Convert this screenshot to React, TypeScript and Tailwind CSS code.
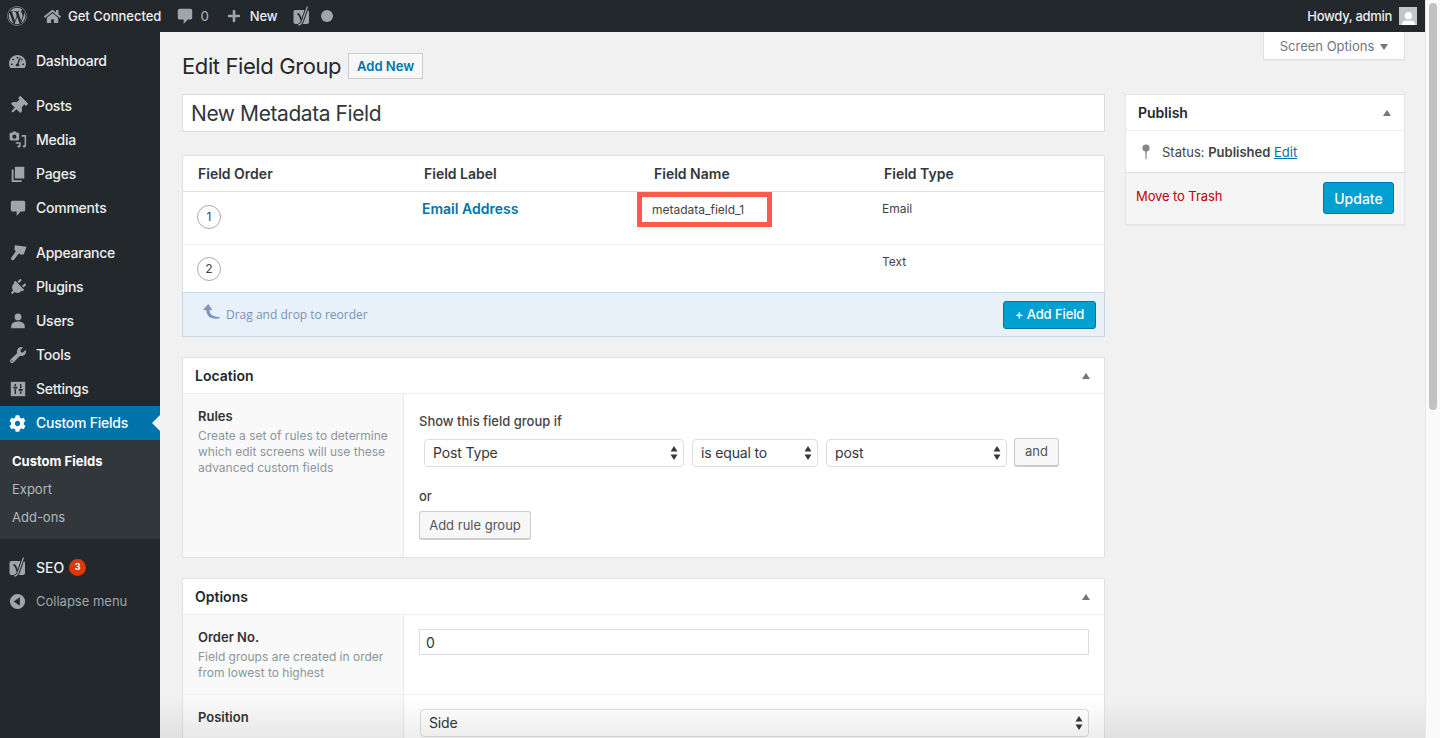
import type { ReactNode } from 'react';
import {
  FaCog,
  FaHome,
  FaPlug,
  FaPlus,
  FaTachometerAlt,
  FaThumbtack,
  FaUser,
  FaWordpress,
  FaWrench,
} from 'react-icons/fa';

const CommentIcon = ({ className }: { className: string }) => (
  <svg viewBox="0 0 20 20" className={className} fill="currentColor">
    <path d="M4 2h12c1.100 0 2 .9 2 2v8c0 1.100-.9 2-2 2h-3l-4.500 5v-5H4c-1.100 0-2-.9-2-2V4c0-1.100.9-2 2-2z" />
  </svg>
);

const YoastIcon = ({ className }: { className: string }) => (
  <svg viewBox="0 0 20 20" className={className}>
    <path d="M3.500 4H15c1.200 0 2 .8 2 2v10c0 1.200-.8 2-2 2H3.500c-1.200 0-2-.8-2-2V6c0-1.200.8-2 2-2z" fill="currentColor" />
    <path d="M5.500 7.500c2 1 3 3.500 3.700 6.500" stroke="#23282d" strokeWidth="1.800" fill="none" />
    <path d="M15.500 .5L10 16c-.6 1.700-1.800 2.800-3.800 3.200" stroke="#23282d" strokeWidth="3.200" fill="none" />
    <path d="M15.500 .5L10 16c-.6 1.700-1.800 2.800-3.800 3.200" stroke="currentColor" strokeWidth="1.200" fill="none" />
  </svg>
);

const MediaIcon = ({ className }: { className: string }) => (
  <svg viewBox="0 0 20 20" className={className} fill="currentColor">
    <path
      fillRule="evenodd"
      d="M2 2h1.500l.8-1.500h3.400L8.500 2H10c.8 0 1.300.5 1.300 1.300v6c0 .8-.5 1.300-1.300 1.300H2c-.8 0-1.300-.5-1.300-1.300v-6C.7 2.500 1.200 2 2 2zm4 2a2.300 2.300 0 100 4.600A2.300 2.300 0 006 4zM14 4.500h5v12c0 1.200-1 1.900-2 1.900s-1.700-.6-1.700-1.400.9-1.500 2-1.500V6.500H14zM7.500 12.500H13v4.200c0 1-1 1.700-2 1.700s-1.600-.6-1.600-1.300.8-1.400 2-1.400v-1.400H7.500z"
    />
  </svg>
);

const PagesIcon = ({ className }: { className: string }) => (
  <svg viewBox="0 0 20 20" className={className} fill="currentColor">
    <path d="M6.500 2H17v13H6.500z" />
    <path d="M3 5h2v12h9v2H3z" />
  </svg>
);

const BrushIcon = ({ className }: { className: string }) => (
  <svg viewBox="0 0 20 20" className={className} fill="currentColor">
    <path d="M6.500 1.500L19.500 3l-3 8.500-3.500.5-1.800-1.800-5.700 7.300c-1.100 1.400-4-.3-3-2.300l5-6.900-1.500-2.300z" />
  </svg>
);

const UserIcon = ({ className }: { className: string }) => (
  <svg viewBox="0 0 20 20" className={className} fill="currentColor">
    <circle cx="10" cy="5.500" r="3.800" />
    <path d="M2.500 18v-2.500c0-3 3-5 7.500-5s7.500 2 7.500 5V18z" />
  </svg>
);

const SettingsIcon = ({ className }: { className: string }) => (
  <svg viewBox="0 0 20 20" className={className}>
    <path d="M2 2h16v16H2z" fill="currentColor" />
    <path d="M7 4.500v2.500M7 10v5.500M13 4.500v5M13 12.500v3" stroke="#23282d" strokeWidth="1.500" fill="none" />
    <path d="M4.800 8.500h4.400M10.800 11h4.400" stroke="#23282d" strokeWidth="1.800" fill="none" />
  </svg>
);

const CollapseIcon = ({ className }: { className: string }) => (
  <svg viewBox="0 0 20 20" className={className} fill="currentColor">
    <path fillRule="evenodd" d="M10 2a8 8 0 110 16 8 8 0 010-16zm2.500 3.500L6 10l6.500 4.500z" />
  </svg>
);

const RingPinIcon = () => (
  <svg viewBox="0 0 12 20" className="h-[16px] w-[10px] text-[#82878c]" fill="currentColor">
    <circle cx="6" cy="5" r="4.500" />
    <path d="M5 8h2l-.4 11h-1.200z" />
  </svg>
);

const UpDown = () => (
  <svg viewBox="0 0 8 14" className="h-[14px] w-[8px] text-[#32373c]" fill="currentColor">
    <path d="M4 0l3.500 5.500h-7zM4 14L.5 8.500h7z" />
  </svg>
);

const Caret = () => (
  <div className="h-0 w-0 border-x-[4px] border-b-[6px] border-x-transparent border-b-[#72777c]" />
);

const ArrowIcon = () => (
  <svg viewBox="0 0 20 18" className="h-[18px] w-[19px] text-[#7e97bb]" fill="none">
    <path d="M1 7l5.500-6.500L11 7H8c0 4.500 3 6.500 8 7 2 .2 3 1 3 1.500-9 2-14-1-14.500-8.500z" fill="currentColor" />
  </svg>
);

const menuTop = [{ label: 'Dashboard', icon: <FaTachometerAlt className="h-[17px] w-[17px]" /> }];

const menuContent = [
  { label: 'Posts', icon: <FaThumbtack className="h-[18px] w-[18px] rotate-45" /> },
  { label: 'Media', icon: <MediaIcon className="h-[18px] w-[18px]" /> },
  { label: 'Pages', icon: <PagesIcon className="h-[18px] w-[18px]" /> },
  { label: 'Comments', icon: <CommentIcon className="h-[18px] w-[18px]" /> },
];

const menuAdmin = [
  { label: 'Appearance', icon: <BrushIcon className="h-[18px] w-[18px]" /> },
  { label: 'Plugins', icon: <FaPlug className="h-[17px] w-[17px] rotate-45" /> },
  { label: 'Users', icon: <UserIcon className="h-[18px] w-[18px]" /> },
  { label: 'Tools', icon: <FaWrench className="h-[16px] w-[16px]" /> },
  { label: 'Settings', icon: <SettingsIcon className="h-[18px] w-[18px]" /> },
];

const MenuItem = ({ label, icon }: { label: string; icon: ReactNode }) => (
  <div className="flex h-[34px] items-center text-[14px] font-medium tracking-[-0.25px] text-[#eeeeee]">
    <div className="flex w-[36px] justify-center pr-[1px] text-[#a0a5aa]">{icon}</div>
    <span className="pb-[2px]">{label}</span>
  </div>
);

const Sidebar = () => (
  <div className="flex h-full w-[160px] shrink-0 flex-col bg-[#23282d] pt-[12px]">
    {menuTop.map((m) => (
      <MenuItem key={m.label} {...m} />
    ))}
    <div className="h-[11px]" />
    {menuContent.map((m) => (
      <MenuItem key={m.label} {...m} />
    ))}
    <div className="h-[11px]" />
    {menuAdmin.map((m) => (
      <MenuItem key={m.label} {...m} />
    ))}
    <div className="relative flex h-[34px] items-center bg-[#0073aa] text-[14px] font-medium tracking-[-0.25px] text-white">
      <div className="flex w-[36px] justify-center pr-[1px]">
        <FaCog className="h-[17px] w-[17px]" />
      </div>
      <span className="pb-[2px]">Custom Fields</span>
      <div className="absolute right-0 top-[9px] h-0 w-0 border-y-[8px] border-r-[8px] border-y-transparent border-r-[#f1f1f1]" />
    </div>
    <div className="flex h-[99px] flex-col gap-[8px] bg-[#32373c] pl-[12px] pt-[11px] text-[13px] text-[#b4b9be]">
      <div className="h-[20px] font-bold leading-[20px] text-white">Custom Fields</div>
      <div className="h-[20px] leading-[20px]">Export</div>
      <div className="h-[20px] leading-[20px]">Add-ons</div>
    </div>
    <div className="h-[11px]" />
    <div className="flex h-[34px] items-center text-[14px] font-medium text-[#eeeeee]">
      <div className="flex w-[36px] justify-center text-[#a0a5aa]">
        <YoastIcon className="h-[20px] w-[20px]" />
      </div>
      <span>SEO</span>
      <span className="ml-[5px] flex h-[17px] w-[17px] items-center justify-center rounded-full bg-[#dc3a03] text-[9px] font-bold text-white">
        3
      </span>
    </div>
    <div className="flex h-[34px] items-center text-[13px] text-[#a0a5aa]">
      <div className="flex w-[36px] justify-center pr-[1px]">
        <CollapseIcon className="h-[19px] w-[19px]" />
      </div>
      <span className="pt-[2px]">Collapse menu</span>
    </div>
  </div>
);

const TopBar = () => (
  <div className="flex h-[32px] shrink-0 items-center bg-[#23282d] pl-[7px] pr-[8px] text-[13px] font-medium text-[#eeeeee]">
    <FaWordpress className="h-[20px] w-[20px] text-[#a0a5aa]" />
    <FaHome className="ml-[17px] h-[17px] w-[17px] text-[#a0a5aa]" />
    <span className="ml-[7px] pt-[1px]">Get Connected</span>
    <CommentIcon className="ml-[15px] h-[18px] w-[18px] text-[#a0a5aa]" />
    <span className="ml-[6px] pt-[1px] text-[#a0a5aa]">0</span>
    <FaPlus className="ml-[18px] h-[14px] w-[14px] text-[#a0a5aa]" />
    <span className="ml-[9px] pt-[1px] tracking-[-0.2px]">New</span>
    <YoastIcon className="ml-[15px] h-[20px] w-[20px] text-[#a0a5aa]" />
    <div className="ml-[9px] h-[12px] w-[12px] rounded-full bg-[#a0a5aa]" />
    <div className="ml-auto flex items-center gap-[7px]">
      <span className="pt-[1px] tracking-[-0.3px]">Howdy, admin</span>
      <div className="flex h-[18px] w-[18px] items-end justify-center overflow-hidden bg-[#c5c5c5]">
        <FaUser className="h-[15px] w-[15px] translate-y-[2px] text-white" />
      </div>
    </div>
  </div>
);

const Select = ({ label, className }: { label: string; className: string }) => (
  <div
    className={`flex h-[28px] items-center justify-between rounded-[4px] border border-[#dddddd] bg-white pl-[8px] pr-[5px] text-[14px] tracking-[-0.15px] text-[#32373c] ${className}`}
  >
    <span className="pb-[2px]">{label}</span>
    <UpDown />
  </div>
);

const GhostButton = ({ label, className }: { label: string; className: string }) => (
  <div
    className={`flex items-center justify-center rounded-[3px] border border-[#cccccc] border-b-2 bg-[#f7f7f7] text-[13px] text-[#555555] ${className}`}
  >
    {label}
  </div>
);

const FieldTable = () => (
  <div className="mt-[23px] bg-white text-[#32373c]">
    <div className="grid h-[37px] grid-cols-[226px_230px_230px_1fr] items-center border border-b border-[#e1e1e1] text-[14px] font-semibold">
      <span className="pl-[15px]">Field Order</span>
      <span className="pl-[15px]">Field Label</span>
      <span className="pl-[15px]">Field Name</span>
      <span className="pl-[15px]">Field Type</span>
    </div>
    <div className="grid h-[53px] grid-cols-[226px_230px_230px_1fr] border-x border-b border-x-[#e1e1e1] border-b-[#f0f0f0]">
      <div className="pl-[14px] pt-[13px]">
        <div className="flex h-[24px] w-[24px] items-center justify-center rounded-full border border-[#aaaaaa] text-[12px] text-[#444444]">
          1
        </div>
      </div>
      <div className="pl-[13px] pt-[7px] text-[14px] font-semibold leading-[20px] text-[#0073aa]">Email Address</div>
      <div className="-ml-[2px]">
        <div className="h-[35px] w-[135px] border-[5px] border-[#ff5a4d] pl-[10px] text-[12px] leading-[25px] text-[#444444]">
          metadata_field_1
        </div>
      </div>
      <div className="pl-[13px] pt-[7px] text-[12px] leading-[20px] text-[#444444]">Email</div>
    </div>
    <div className="grid h-[47px] grid-cols-[226px_230px_230px_1fr] border-x border-x-[#e1e1e1]">
      <div className="pl-[14px] pt-[12px]">
        <div className="flex h-[24px] w-[24px] items-center justify-center rounded-full border border-[#aaaaaa] text-[12px] text-[#444444]">
          2
        </div>
      </div>
      <div />
      <div />
      <div className="pl-[13px] pt-[7px] text-[12px] leading-[20px] text-[#444444]">Text</div>
    </div>
    <div className="flex h-[45px] items-center border border-[#c6d8e6] bg-[#e8f0f9] pl-[19px] pr-[8px]">
      <div className="-translate-y-[3px]">
        <ArrowIcon />
      </div>
      <span className="ml-[5px] font-['Open_Sans',sans-serif] text-[12px] text-[#7a93b5]">
        Drag and drop to reorder
      </span>
      <div className="ml-auto flex h-[28px] w-[93px] items-center justify-center rounded-[3px] border border-[#0073aa] bg-[#00a0d2] text-[13px] font-medium tracking-[-0.1px] text-white">
        + Add Field
      </div>
    </div>
  </div>
);

const BoxHeader = ({ title }: { title: string }) => (
  <div className="flex h-[36px] items-center justify-between border-b border-[#eeeeee] pl-[12px] pr-[14px] text-[14px] font-semibold text-[#23282d]">
    <span>{title}</span>
    <Caret />
  </div>
);

const LeftCell = ({ title, pad, children }: { title: string; pad: string; children?: ReactNode }) => (
  <div className={`w-[221px] shrink-0 border-r border-[#e8e8e8] bg-[#f9f9f9] pl-[15px] pr-[10px] ${pad}`}>
    <div className="text-[13px] font-semibold leading-[18px] text-[#333333]">{title}</div>
    {children && <div className="mt-[3px] text-[12px] leading-[16px] text-[#8b959c]">{children}</div>}
  </div>
);

const LocationBox = () => (
  <div className="mt-[20px] border border-[#e1e1e1] bg-white">
    <BoxHeader title="Location" />
    <div className="flex h-[163px]">
      <LeftCell title="Rules" pad="pt-[13px]">
        Create a set of rules to determine which edit screens will use these advanced custom fields
      </LeftCell>
      <div className="flex-1 pl-[15px] pt-[18px] text-[13px] text-[#444444]">
        <div className="font-medium leading-[18px]">Show this field group if</div>
        <div className="ml-[5px] mt-[9px] flex gap-[8px]">
          <Select label="Post Type" className="w-[260px]" />
          <Select label="is equal to" className="w-[126px]" />
          <Select label="post" className="w-[181px]" />
          <GhostButton label="and" className="-mt-[1px] ml-[-1px] h-[29px] w-[45px]" />
        </div>
        <div className="mt-[20px] font-medium leading-[18px]">or</div>
        <GhostButton label="Add rule group" className="mt-[6px] h-[29px] w-[112px] pt-[1px]" />
      </div>
    </div>
  </div>
);

const OptionsBox = () => (
  <div className="mt-[20px] border border-[#e1e1e1] bg-white">
    <BoxHeader title="Options" />
    <div className="flex h-[80px] border-b border-[#f0f0f0]">
      <LeftCell title="Order No." pad="pt-[13px]">
        Field groups are created in order from lowest to highest
      </LeftCell>
      <div className="flex-1 px-[15px] pt-[14px]">
        <div className="flex h-[26px] items-center border border-[#dddddd] px-[6px] text-[14px] text-[#32373c]">0</div>
      </div>
    </div>
    <div className="flex h-[60px]">
      <LeftCell title="Position" pad="pt-[13px]" />
      <div className="flex-1 pl-[16px] pr-[15px] pt-[14px]">
        <Select label="Side" className="w-full" />
      </div>
    </div>
  </div>
);

const PublishBox = () => (
  <div className="border border-[#e5e5e5] bg-white text-[13px] text-[#444444] shadow-[0_1px_1px_rgba(0,0,0,0.04)]">
    <div className="flex h-[36px] items-center justify-between border-b border-[#eeeeee] pl-[12px] pr-[13px] text-[14px] font-semibold text-[#23282d]">
      <span>Publish</span>
      <Caret />
    </div>
    <div className="flex h-[41px] items-center pl-[15px]">
      <RingPinIcon />
      <span className="ml-[11px] pt-[2px]">
        Status: <span className="font-semibold">Published</span>{' '}
        <span className="text-[#0073aa] underline">Edit</span>
      </span>
    </div>
    <div className="flex h-[52px] items-start justify-between border-t border-[#dddddd] bg-[#f5f5f5] px-[10px] pt-[9px]">
      <span className="mt-[5px] tracking-[-0.1px] text-[#c00000]">Move to Trash</span>
      <div className="flex h-[32px] w-[71px] items-center justify-center rounded-[3px] border border-[#0073aa] bg-[#00a0d2] text-[14px] font-medium text-white">
        Update
      </div>
    </div>
  </div>
);

export default function App() {
  return (
    <div className="relative flex h-[738px] overflow-hidden bg-[#f1f1f1] font-['Inter',sans-serif]">
      <div className="flex min-w-0 flex-1 flex-col">
        <TopBar />
        <div className="flex min-h-0 flex-1">
          <Sidebar />
          <div className="min-w-0 flex-1 pl-[22px] pr-[20px]">
            <div className="flex h-[62px] items-start justify-between">
              <div className="flex items-center pt-[21px]">
                <h1 className="text-[22px] font-normal leading-[26px] tracking-[-0.4px] text-[#23282d]">
                  Edit Field Group
                </h1>
                <div className="ml-[7px] flex h-[26px] w-[75px] items-center justify-center border border-[#cccccc] bg-[#f7f7f7] pt-[1px] text-[13px] font-semibold text-[#0073aa]">
                  Add New
                </div>
              </div>
              <div className="flex h-[28px] w-[142px] items-center justify-center gap-[6px] border-x border-b border-[#e1e1e1] bg-white pt-[2px] text-[13px] text-[#72777c] shadow-[0_1px_1px_rgba(0,0,0,0.04)]">
                <span>Screen Options</span>
                <div className="h-0 w-0 border-x-[4px] border-t-[6px] border-x-transparent border-t-[#72777c]" />
              </div>
            </div>
            <div className="grid grid-cols-[923px_280px] gap-[20px]">
              <div>
                <div className="flex h-[38px] items-center border border-[#dddddd] bg-white pl-[8px] pt-[1px] text-[21px] tracking-[-0.42px] text-[#32373c]">
                  New Metadata Field
                </div>
                <FieldTable />
                <LocationBox />
                <OptionsBox />
              </div>
              <div>
                <PublishBox />
              </div>
            </div>
          </div>
        </div>
      </div>
      <div className="w-[15px] shrink-0 border-l border-[#e8e8e8] bg-[#fafafa] pl-[3px] pt-[3px]">
        <div className="h-[407px] w-[8px] rounded-full bg-[#c1c1c1]" />
      </div>
      <div className="pointer-events-none absolute bottom-0 left-[160px] right-[15px] h-[40px] bg-gradient-to-b from-transparent to-black/[0.07]" />
    </div>
  );
}
